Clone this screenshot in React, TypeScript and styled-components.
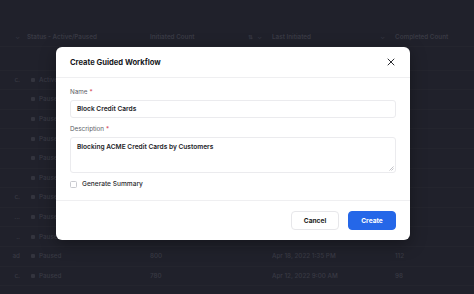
import React from "react";
import styled, { createGlobalStyle } from "styled-components";

const GlobalStyle = createGlobalStyle`
  html, body {
    margin: 0;
    padding: 0;
    background: #20212b;
    font-family: Inter, "Noto Sans", sans-serif;
  }
  * {
    box-sizing: border-box;
  }
`;

const Page = styled.div`
  width: 474px;
  height: 294px;
  overflow: hidden;
  position: relative;
  background: #20212b;
  padding-top: 27px;
`;

const Table = styled.div`
  display: flex;
  flex-direction: column;
`;

const Row = styled.div<{ $head?: boolean }>`
  display: grid;
  grid-template-columns: 27px 123px 122px 123px 1fr;
  align-items: center;
  height: ${(p) => (p.$head ? "20px" : "19.6px")};
  border-bottom: 1px solid #24252e;
  margin-bottom: ${(p) => (p.$head ? "4px" : "0")};
  font-size: 6.3px;
  font-weight: ${(p) => (p.$head ? 600 : 500)};
  color: #393a44;
  white-space: nowrap;
`;

const NameCell = styled.div`
  display: flex;
  justify-content: flex-end;
  padding-right: 7px;
`;

const Cell = styled.div`
  display: flex;
  align-items: center;
  gap: 4px;
`;

const HeadCell = styled(Cell)`
  justify-content: space-between;
  padding-right: 10px;
`;

const Dot = styled.span`
  display: inline-block;
  width: 4px;
  height: 4px;
  border-radius: 1px;
  background: #33343e;
  margin-left: 4px;
`;

const Glyph = styled.span`
  font-size: 6px;
  color: #353641;
`;

const Modal = styled.div`
  position: absolute;
  left: 56px;
  top: 47px;
  width: 354px;
  height: 193px;
  background: #ffffff;
  border-radius: 6px;
  box-shadow: 0 4px 16px rgba(0, 0, 0, 0.35);
  display: flex;
  flex-direction: column;
`;

const Header = styled.div`
  height: 31px;
  padding: 0 14px;
  display: flex;
  align-items: center;
  justify-content: space-between;
  border-bottom: 1px solid #efeff1;
`;

const Title = styled.h2`
  margin: 0;
  font-size: 7.6px;
  font-weight: 700;
  color: #16171b;
`;

const Close = styled.button`
  border: none;
  background: none;
  padding: 0;
  width: 10px;
  height: 10px;
  display: flex;
  align-items: center;
  justify-content: center;
  color: #333;
`;

const Body = styled.div`
  padding: 10px 14px 12px;
  display: flex;
  flex-direction: column;
`;

const Label = styled.label`
  font-size: 6.3px;
  color: #5b5d66;
  line-height: 9px;
  margin-bottom: 3px;
`;

const Req = styled.span`
  color: #d2384a;
  margin-left: 2px;
`;

const Input = styled.div`
  height: 18px;
  border: 1px solid #ebebee;
  border-radius: 3px;
  padding: 0 6px;
  display: flex;
  align-items: center;
  font-size: 6.6px;
  font-weight: 600;
  color: #222226;
  margin-bottom: 7px;
`;

const TextArea = styled.div`
  height: 36px;
  border: 1px solid #ebebee;
  border-radius: 3px;
  padding: 5px 6px;
  font-size: 6.6px;
  font-weight: 600;
  color: #222226;
  position: relative;
  margin-bottom: 7px;
`;

const Grip = styled.svg`
  position: absolute;
  right: 1px;
  bottom: 1px;
`;

const CheckRow = styled.div`
  display: flex;
  align-items: center;
  gap: 5px;
  font-size: 6.6px;
  font-weight: 500;
  color: #2b2c31;
`;

const Box = styled.span`
  width: 7px;
  height: 7px;
  border: 1px solid #c9cacf;
  border-radius: 1.5px;
  background: #fff;
`;

const Footer = styled.div`
  margin-top: auto;
  border-top: 1px solid #efeff1;
  padding: 10px 14px 10px;
  display: flex;
  justify-content: flex-end;
  gap: 9px;
`;

const Button = styled.button<{ $primary?: boolean }>`
  width: 48px;
  height: 19px;
  border-radius: 4px;
  font-family: inherit;
  font-size: 6.6px;
  font-weight: 700;
  border: 1px solid ${(p) => (p.$primary ? "#2567e8" : "#e7e7ea")};
  background: ${(p) => (p.$primary ? "#2567e8" : "#ffffff")};
  color: ${(p) => (p.$primary ? "#ffffff" : "#1d1e22")};
  padding: 0;
`;

const rows = [
  { name: "c.", status: "Active", count: "1200", date: "May 02, 2022 9:10 AM", done: "340" },
  { name: "", status: "Paused", count: "950", date: "May 01, 2022 4:20 PM", done: "288" },
  { name: "", status: "Paused", count: "900", date: "Apr 30, 2022 2:05 PM", done: "251" },
  { name: "", status: "Paused", count: "870", date: "Apr 29, 2022 11:45 AM", done: "230" },
  { name: "", status: "Paused", count: "860", date: "Apr 28, 2022 10:15 AM", done: "214" },
  { name: "", status: "Paused", count: "840", date: "Apr 27, 2022 6:40 PM", done: "198" },
  { name: "c.", status: "Paused", count: "820", date: "Apr 27, 2022 1:10 PM", done: "180" },
  { name: "...", status: "Paused", count: "810", date: "Apr 26, 2022 5:50 PM", done: "170" },
  { name: "..", status: "Paused", count: "800", date: "Apr 26, 2022 3:35 PM", done: "156" },
  { name: "ad", status: "Paused", count: "800", date: "Apr 18, 2022 1:35 PM", done: "112" },
  { name: "c.", status: "Paused", count: "780", date: "Apr 12, 2022 9:00 AM", done: "98" },
];

export default function App() {
  return (
    <Page>
      <GlobalStyle />
      <Table>
        <Row $head>
          <NameCell>
            <Glyph>⌄</Glyph>
          </NameCell>
          <HeadCell>Status - Active/Paused</HeadCell>
          <HeadCell>
            Initiated Count
            <Glyph>⇅ &nbsp; ⌄</Glyph>
          </HeadCell>
          <HeadCell>
            Last Initiated
            <Glyph>⌄</Glyph>
          </HeadCell>
          <HeadCell>Completed Count</HeadCell>
        </Row>
        <Row />
        {rows.map((r) => (
          <Row key={r.date}>
            <NameCell>{r.name}</NameCell>
            <Cell>
              <Dot />
              {r.status}
            </Cell>
            <Cell>{r.count}</Cell>
            <Cell>{r.date}</Cell>
            <Cell>{r.done}</Cell>
          </Row>
        ))}
      </Table>

      <Modal role="dialog">
        <Header>
          <Title>Create Guided Workflow</Title>
          <Close aria-label="Close">
            <svg width="8" height="8" viewBox="0 0 8 8">
              <path d="M1 1L7 7M7 1L1 7" stroke="#2a2b30" strokeWidth="1" strokeLinecap="round" />
            </svg>
          </Close>
        </Header>
        <Body>
          <Label>
            Name<Req>*</Req>
          </Label>
          <Input>Block Credit Cards</Input>
          <Label>
            Description<Req>*</Req>
          </Label>
          <TextArea>
            Blocking ACME Credit Cards by Customers
            <Grip width="5" height="5" viewBox="0 0 5 5">
              <path d="M4.5 0.5L0.5 4.5M4.5 2.5L2.5 4.5" stroke="#9a9ba2" strokeWidth="0.6" />
            </Grip>
          </TextArea>
          <CheckRow>
            <Box />
            Generate Summary
          </CheckRow>
        </Body>
        <Footer>
          <Button>Cancel</Button>
          <Button $primary>Create</Button>
        </Footer>
      </Modal>
    </Page>
  );
}
